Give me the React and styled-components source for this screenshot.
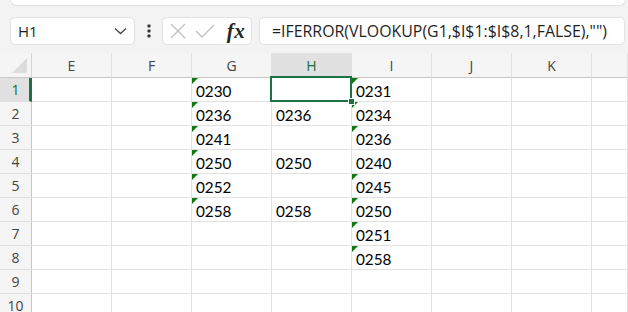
import React from "react";
import styled, { createGlobalStyle } from "styled-components";

const Global = createGlobalStyle`
  html, body { margin: 0; padding: 0; background: #f3f3f3; overflow: hidden; }
  #root { width: 628px; height: 312px; overflow: hidden; }
`;

const Page = styled.div`
  width: 628px;
  height: 312px;
  display: flex;
  flex-direction: column;
  background: #f3f3f3;
  font-family: "Open Sans", "Noto Sans", sans-serif;
`;

const TopCard = styled.div`
  height: 5px;
  margin: 0 2px 0 10px;
  background: #ffffff;
  border: 1px solid #e1e1e1;
  border-top: none;
  border-radius: 0 0 7px 7px;
  flex: none;
`;

const FormulaBar = styled.div`
  display: flex;
  align-items: center;
  height: 28px;
  padding: 11px 3px 8px 10px;
  flex: none;
`;

const Box = styled.div`
  height: 28px;
  box-sizing: border-box;
  background: #ffffff;
  border: 1px solid #e3e3e3;
  border-radius: 5px;
  display: flex;
  align-items: center;
`;

const NameBox = styled(Box)`
  width: 125px;
  padding: 0 7px 0 7px;
  justify-content: space-between;
  font-size: 15px;
  color: #1f1f1f;
`;

const Dots = styled.div`
  width: 27px;
  display: flex;
  justify-content: center;
`;

const FxBox = styled(Box)`
  width: 90px;
  padding: 0 0 0 6px;
`;

const IconSlot = styled.div`
  width: ${(p) => p.$w}px;
  display: flex;
  justify-content: center;
  align-items: center;
`;

const Fx = styled.span`
  font-family: "Liberation Serif", "DejaVu Serif", serif;
  font-style: italic;
  font-weight: 600;
  font-size: 21px;
  color: #262626;
  letter-spacing: 0.5px;
  line-height: 1;
`;

const FormulaInput = styled(Box)`
  flex: 1;
  margin-left: 7px;
  padding-left: 12px;
  font-size: 15.9px;
  color: #1f1f1f;
  white-space: nowrap;
  overflow: hidden;
`;

const Grid = styled.div`
  display: grid;
  grid-template-columns: 32px repeat(7, 80px) 1fr;
  grid-template-rows: 25px;
  grid-auto-rows: 24px;
  background: #ffffff;
  flex: 1;
`;

const Corner = styled.div`
  background: #f5f5f5;
  border-right: 1px solid #d4d4d4;
  border-bottom: 1px solid #c8c8c8;
  overflow: hidden;
`;

const ColHead = styled.div`
  background: ${(p) => (p.$sel ? "#e1e1e1" : "#f5f5f5")};
  border-right: 1px solid #e1e1e1;
  border-bottom: ${(p) => (p.$sel ? "2px solid #1e7145" : "1px solid #c8c8c8")};
  color: ${(p) => (p.$sel ? "#196b3c" : "#444444")};
  font-size: 14px;
  display: flex;
  align-items: center;
  justify-content: center;
  box-sizing: border-box;
  padding-top: ${(p) => (p.$sel ? "1px" : "0")};
`;

const RowHead = styled.div`
  background: ${(p) => (p.$sel ? "#e1e1e1" : "#f5f5f5")};
  border-right: ${(p) => (p.$sel ? "3px solid #1e7145" : "1px solid #c8c8c8")};
  border-bottom: 1px solid #e1e1e1;
  color: ${(p) => (p.$sel ? "#196b3c" : "#444444")};
  font-size: 14px;
  display: flex;
  align-items: center;
  justify-content: center;
  box-sizing: border-box;
  padding-left: ${(p) => (p.$sel ? "2px" : "0")};
`;

const Cell = styled.div`
  position: relative;
  border-right: 1px solid #e1e1e1;
  border-bottom: 1px solid #e1e1e1;
  font-family: "Lato", "Open Sans", sans-serif;
  font-size: 15.3px;
  color: #000000;
  display: flex;
  align-items: flex-end;
  padding: 0 0 2px 4px;
  box-sizing: border-box;
  line-height: 1;
`;

const Flag = styled.span`
  position: absolute;
  left: 0;
  top: 0;
  width: 0;
  height: 0;
  border-top: 6px solid #0f7b0f;
  border-right: 6px solid transparent;
`;

const Selection = styled.span`
  position: absolute;
  left: -2px;
  top: -2px;
  right: -1px;
  bottom: -1px;
  border: 2px solid #1e7145;
  pointer-events: none;
  z-index: 2;
`;

const Handle = styled.span`
  position: absolute;
  right: -4px;
  bottom: -4px;
  width: 5px;
  height: 5px;
  background: #1e7145;
  border: 1px solid #ffffff;
  z-index: 3;
`;

const cols = ["E", "F", "G", "H", "I", "J", "K", ""];
const G = ["0230", "0236", "0241", "0250", "0252", "0258"];
const H = ["", "0236", "", "0250", "", "0258"];
const I = ["0231", "0234", "0236", "0240", "0245", "0250", "0251", "0258"];
const IFlag = [true, true, true, false, true, true, true, true];

function cellContent(col, r) {
  if (col === "G" && G[r]) return { text: G[r], flag: true };
  if (col === "H" && H[r]) return { text: H[r], flag: false };
  if (col === "I" && I[r]) return { text: I[r], flag: IFlag[r] };
  return { text: "", flag: false };
}

export default function App() {
  const rows = Array.from({ length: 10 }, (_, i) => i);
  return (
    <Page>
      <Global />
      <TopCard />
      <FormulaBar>
        <NameBox>
          <span>H1</span>
          <svg width="13" height="8" viewBox="0 0 13 8">
            <path d="M1 1.5 L6.5 6.5 L12 1.5" fill="none" stroke="#444" strokeWidth="1.3" />
          </svg>
        </NameBox>
        <Dots>
          <svg width="4" height="14" viewBox="0 0 4 14">
            <rect x="0.5" y="0.5" width="3" height="3" rx="0.8" fill="#333" />
            <rect x="0.5" y="5.5" width="3" height="3" rx="0.8" fill="#333" />
            <rect x="0.5" y="10.5" width="3" height="3" rx="0.8" fill="#333" />
          </svg>
        </Dots>
        <FxBox>
          <IconSlot $w={17}>
            <svg width="16" height="16" viewBox="0 0 16 16">
              <path d="M1 1 L15 15 M15 1 L1 15" stroke="#c2c2c2" strokeWidth="1.4" fill="none" />
            </svg>
          </IconSlot>
          <IconSlot $w={37}>
            <svg width="20" height="14" viewBox="0 0 20 14">
              <path d="M1 7 L7 13 L19 1" stroke="#c2c2c2" strokeWidth="1.4" fill="none" />
            </svg>
          </IconSlot>
          <IconSlot $w={26}>
            <Fx>fx</Fx>
          </IconSlot>
        </FxBox>
        <FormulaInput>=IFERROR(VLOOKUP(G1,$I$1:$I$8,1,FALSE),"")</FormulaInput>
      </FormulaBar>
      <Grid>
        <Corner>
          <svg width="31" height="24" viewBox="0 0 31 24" style={{ display: "block" }}>
            <path d="M27 5 L27 20 L12 20 Z" fill="#dcdcdc" />
          </svg>
        </Corner>
        {cols.map((c, i) => (
          <ColHead key={"h" + i} $sel={c === "H"}>
            {c}
          </ColHead>
        ))}
        {rows.map((r) => (
          <React.Fragment key={r}>
            <RowHead $sel={r === 0}>{r + 1}</RowHead>
            {cols.map((c, ci) => {
              const { text, flag } = cellContent(c, r);
              return (
                <Cell key={ci}>
                  {flag && <Flag />}
                  {text}
                  {c === "H" && r === 0 && (
                    <>
                      <Selection />
                      <Handle />
                    </>
                  )}
                </Cell>
              );
            })}
          </React.Fragment>
        ))}
      </Grid>
    </Page>
  );
}
